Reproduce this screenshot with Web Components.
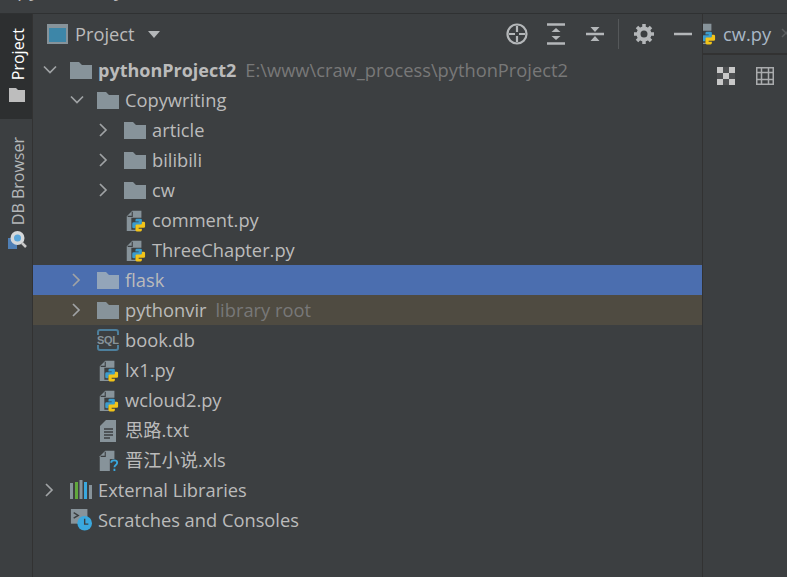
<!DOCTYPE html>
<html>
<head>
<meta charset="utf-8">
<style>
  html, body { margin: 0; height: 100%; background: #3c3f41; overflow: hidden; }
  body { font-family: "Open Sans", "Noto Sans CJK SC", sans-serif; color: #bbbbbb; }
</style>
</head>
<body>
<ide-app>
  <ide-topbar slot="top">pythonProject2,</ide-topbar>
  <ide-sidebar slot="side">
    <side-tab active label="Project" icon="folder"></side-tab>
    <side-tab label="DB Browser" icon="db"></side-tab>
  </ide-sidebar>
  <project-panel slot="main">
    <tree-row depth="0" arrow="open" icon="folder" label="pythonProject2" hint="E:\www\craw_process\pythonProject2" bold></tree-row>
    <tree-row depth="1" arrow="open" icon="folder" label="Copywriting"></tree-row>
    <tree-row depth="2" arrow="closed" icon="folder" label="article"></tree-row>
    <tree-row depth="2" arrow="closed" icon="folder" label="bilibili"></tree-row>
    <tree-row depth="2" arrow="closed" icon="folder" label="cw"></tree-row>
    <tree-row depth="2" icon="python" label="comment.py"></tree-row>
    <tree-row depth="2" icon="python" label="ThreeChapter.py"></tree-row>
    <tree-row depth="1" arrow="closed" icon="folder" label="flask" state="selected"></tree-row>
    <tree-row depth="1" arrow="closed" icon="folder" label="pythonvir" hint="library root" state="library"></tree-row>
    <tree-row depth="1" icon="sql" label="book.db"></tree-row>
    <tree-row depth="1" icon="python" label="lx1.py"></tree-row>
    <tree-row depth="1" icon="python" label="wcloud2.py"></tree-row>
    <tree-row depth="1" icon="text" label="思路.txt"></tree-row>
    <tree-row depth="1" icon="unknown" label="晋江小说.xls"></tree-row>
    <tree-row depth="0" arrow="closed" icon="libs" label="External Libraries"></tree-row>
    <tree-row depth="0" icon="scratch" label="Scratches and Consoles"></tree-row>
  </project-panel>
  <editor-stub slot="right"></editor-stub>
</ide-app>

<script>
"use strict";
// python logo in a 14x14 box, second half is the same shape turned round
const SNAKE = "M5 0h4a1.500 1.500 0 0 1 1.500 1.500V6A1.500 1.500 0 0 1 9 7.500H5A1.500 1.500 0 0 0 3.500 9v1.500h-2A1.500 1.500 0 0 1 0 9V5.500A1.500 1.500 0 0 1 1.500 4H7V3H3.500V1.500A1.500 1.500 0 0 1 5 0z";
const ICONS = {
  folder: `<svg width="22" height="22" viewBox="0 0 22 22"><path d="M0 3h9l3 3h10v14H0z" fill="#87939a"/></svg>`,
  python: `<svg width="24" height="24" viewBox="0 0 24 24"><path d="M3 8l6-6h10v9h-6v13H3z" fill="#87939a"/><path d="M4 8h5V3" fill="none" stroke="#3c3f41" stroke-width="1.200"/>
    <g transform="translate(9 10.500)"><path d="M-1 -1h13v9H5v4H-1z" fill="#3c3f41"/><path d="${SNAKE}" fill="#3b9ccd"/><path d="${SNAKE}" fill="#f2c419" transform="rotate(180 7 7)"/></g></svg>`,
  sql: `<svg width="22" height="22" viewBox="0 0 22 22"><path d="M1 6V3a2 2 0 0 1 2-2h16a2 2 0 0 1 2 2v3M1 16v3a2 2 0 0 0 2 2h16a2 2 0 0 0 2-2v-3" fill="none" stroke="#4d7f9c" stroke-width="2"/><text x="0" y="15" font-family="Liberation Sans, sans-serif" font-size="11" font-weight="700" fill="#87939a" textLength="22">SQL</text></svg>`,
  text: `<svg width="22" height="24" viewBox="0 0 22 24"><path d="M3 8l6-6h10v22H3z" fill="#87939a"/><path d="M7 11h9M7 14h9M7 17h9M7 20h6" stroke="#3c3f41" stroke-width="1.300"/></svg>`,
  unknown: `<svg width="24" height="24" viewBox="0 0 24 24"><path d="M3 8l6-6h10v22H3z" fill="#87939a"/><path d="M4 8h5V3" fill="none" stroke="#3c3f41" stroke-width="1.200"/><rect x="14" y="11" width="10" height="13" fill="#3c3f41"/><path d="M15.500 15c0-3.500 6.500-3.500 6.500 0 0 2.500-3 2.500-3 5" fill="none" stroke="#3aa8de" stroke-width="2"/><rect x="18" y="21.500" width="2" height="2.500" fill="#3aa8de"/></svg>`,
  libs: `<svg width="22" height="22" viewBox="0 0 22 22"><path d="M0 4h3v16H0z" fill="#87939a"/><path d="M5 3h3v17H5z" fill="#62a83e"/><path d="M9.500 1h3v19h-3z" fill="#87939a"/><path d="M14 3h3v17h-3z" fill="#3aa8de"/><path d="M19 6h3v14h-3z" fill="#87939a"/></svg>`,
  scratch: `<svg width="24" height="24" viewBox="0 0 24 24"><path d="M1 0h18v16H1z" fill="#87939a"/><path d="M4 4l5 3-5 3" fill="none" stroke="#3c3f41" stroke-width="1.500"/><circle cx="16" cy="15.500" r="8" fill="#3aa8de"/><path d="M16 10.500v6h4" fill="none" stroke="#3c3f41" stroke-width="1.500"/></svg>`,
  sideFolder: `<svg width="16" height="14" viewBox="0 0 16 14"><path d="M0 0h7l2 2h7v12H0z" fill="#bdbdbd"/></svg>`,
  db: `<svg width="20" height="19" viewBox="0 0 20 19"><path d="M1 7h9v11H1z" fill="#4f7fb5"/><circle cx="10.500" cy="7" r="7" fill="#d5d8da"/><circle cx="10.500" cy="7" r="3.500" fill="#5aa6da"/><path d="M15 12l4 4" stroke="#c8c8c8" stroke-width="2.500"/></svg>`
};

class IdeApp extends HTMLElement {
  constructor() {
    super();
    const shadow = this.attachShadow({ mode: "open" });
    shadow.innerHTML = `
    <style>
      :host { display: flex; flex-direction: column; height: 577px; width: 787px; background: #3c3f41; }
      .body { display: flex; flex: 1; min-height: 0; }
    </style>
    <slot name="top"></slot>
    <div class="body">
      <slot name="side"></slot>
      <slot name="main"></slot>
      <slot name="right"></slot>
    </div>
    `;
  }
}

class IdeTopbar extends HTMLElement {
  constructor() {
    super();
    const shadow = this.attachShadow({ mode: "open" });
    shadow.innerHTML = `
    <style>
      :host { display: block; height: 13px; border-bottom: 1px solid #2f3132; overflow: hidden; flex: none; }
      div { margin: -24px 0 0 17px; font-size: 20px; line-height: 26px; white-space: nowrap; color: #bbbbbb; }
    </style>
    <div><slot></slot></div>
    `;
  }
}

class IdeSidebar extends HTMLElement {
  constructor() {
    super();
    const shadow = this.attachShadow({ mode: "open" });
    shadow.innerHTML = `
    <style>
      :host { display: flex; flex-direction: column; width: 32px; flex: none; border-right: 1px solid #323232; }
    </style>
    <slot></slot>
    `;
  }
}

class SideTab extends HTMLElement {
  constructor() {
    super();
    this.attachShadow({ mode: "open" });
  }
  connectedCallback() {
    const icon = this.getAttribute("icon") === "folder" ? ICONS.sideFolder : ICONS.db;
    this.shadowRoot.innerHTML = `
    <style>
      :host { display: flex; flex-direction: column; align-items: center; gap: 6px; padding: 18px 0 0; color: #b4b7b9; font-size: 16px; }
      :host([active]) { background: #2d2f30; color: #ffffff; padding: 14px 0 17px; gap: 8px; }
      span { writing-mode: vertical-rl; transform: translateX(2px) rotate(180deg); line-height: 20px; white-space: nowrap; }
      i { display: flex; margin-left: 1px; }
    </style>
    <span>${this.getAttribute("label")}</span><i>${icon}</i>
    `;
  }
}

class ProjectPanel extends HTMLElement {
  constructor() {
    super();
    const shadow = this.attachShadow({ mode: "open" });
    shadow.innerHTML = `
    <style>
      :host { display: flex; flex-direction: column; flex: 1; min-width: 0; }
      header { display: flex; align-items: center; height: 41px; padding: 0 10px 2px 14px; flex: none; box-sizing: border-box; }
      .win { width: 21px; height: 20px; box-sizing: border-box; border: 2px solid #87939a; border-top-width: 4px; background: #3d86a8; margin-right: 7px; }
      .title { font-size: 18.300px; color: #bbbbbb; }
      .drop { width: 0; height: 0; border: 6.500px solid transparent; border-top: 7px solid #b4b7b9; border-bottom: 0; margin-left: 13px; margin-top: 2px; }
      .tools { display: flex; align-items: center; margin-left: auto; }
      .tools svg { display: block; }
      .sep { width: 1px; height: 30px; background: #55585a; margin: 0 15px 0 14px; }
    </style>
    <header>
      <span class="win"></span>
      <span class="title">Project</span>
      <span class="drop"></span>
      <span class="tools">
        <svg width="22" height="22" viewBox="0 0 22 22" style="margin-right:19px"><circle cx="11" cy="11" r="9.500" fill="none" stroke="#b4b7b9" stroke-width="2.200"/><path d="M11 3v6M11 13v6M3 11h6M13 11h6" stroke="#b4b7b9" stroke-width="2.200"/></svg>
        <svg width="18" height="22" viewBox="0 0 18 22" style="margin-right:21px"><path d="M0 1.500h18M0 20.500h18" stroke="#b4b7b9" stroke-width="2.500"/><path d="M9 5l4.500 4h-9zM9 17l4.500-4h-9z" fill="#b4b7b9"/></svg>
        <svg width="18" height="20" viewBox="0 0 18 20"><path d="M0 10h18" stroke="#b4b7b9" stroke-width="2.500"/><path d="M9 8L4.500 3h9zM9 12l4.500 5h-9z" fill="#b4b7b9"/></svg>
        <span class="sep"></span>
        <svg width="20" height="20" viewBox="0 0 20 20" style="margin-right:20px"><circle cx="10" cy="10" r="5.500" fill="none" stroke="#b4b7b9" stroke-width="4"/><path d="M10 0v4M10 16v4M0 10h4M16 10h4M3 3l3 3M14 14l3 3M17 3l-3 3M6 14l-3 3" stroke="#b4b7b9" stroke-width="3.500"/></svg>
        <svg width="18" height="4" viewBox="0 0 18 4"><path d="M0 2h18" stroke="#b4b7b9" stroke-width="2.500"/></svg>
      </span>
    </header>
    <slot></slot>
    `;
  }
}

class TreeRow extends HTMLElement {
  constructor() {
    super();
    this.attachShadow({ mode: "open" });
  }
  connectedCallback() {
    const depth = Number(this.getAttribute("depth") || 0);
    const arrow = this.getAttribute("arrow");
    let chevron = "";
    if (arrow === "open") {
      chevron = `<svg width="14" height="14" viewBox="0 0 14 14"><path d="M1 3.500l6 6 6-6" fill="none" stroke="#a0a3a5" stroke-width="1.700"/></svg>`;
    } else if (arrow === "closed") {
      chevron = `<svg width="14" height="14" viewBox="0 0 14 14"><path d="M3 1l6 6-6 6" fill="none" stroke="#a0a3a5" stroke-width="1.700"/></svg>`;
    }
    const hint = this.getAttribute("hint");
    let icon = ICONS[this.getAttribute("icon")];
    if (this.getAttribute("state") === "selected") icon = icon.replace("#87939a", "#93a5b9");
    this.shadowRoot.innerHTML = `
    <style>
      :host { display: flex; align-items: center; height: 30px; padding-left: ${depth * 27 + 10}px; font-size: 18.300px; color: #bbbbbb; white-space: nowrap; }
      :host([state="selected"]) { background: #4b6eaf; }
      :host([state="library"]) { background: #4f4b41; }
      .arrow { width: 27px; display: flex; flex: none; }
      .icon { width: 22px; height: 24px; display: flex; align-items: center; justify-content: flex-start; flex: none; margin-right: 6px; }
      .label { margin-bottom: 2px; }
      :host([bold]) .label { font-weight: 700; font-size: 18px; margin-bottom: 0; }
      .hint { color: #787878; margin: 0 0 2px 9px; }
    </style>
    <span class="arrow">${chevron}</span>
    <span class="icon">${icon}</span>
    <span class="label">${this.getAttribute("label")}</span>
    ${hint ? `<span class="hint">${hint}</span>` : ""}
    `;
  }
}

class EditorStub extends HTMLElement {
  constructor() {
    super();
    const shadow = this.attachShadow({ mode: "open" });
    shadow.innerHTML = `
    <style>
      :host { display: flex; flex-direction: column; width: 84px; flex: none; border-left: 1px solid #323232; }
      .tab { display: flex; align-items: center; height: 38px; border-bottom: 2px solid #323232; font-size: 18.300px; color: #a9b7c6; white-space: nowrap; overflow: hidden; padding-bottom: 1px; box-sizing: content-box; }
      .tab i { display: flex; flex: none; margin-left: -9px; width: 22px; }
      .tab span { margin-left: 7px; }
      .tab svg.close { margin-left: 10px; flex: none; }
      .tools { display: flex; gap: 21px; padding: 12px 0 0 14px; }
      svg { display: block; }
    </style>
    <div class="tab"><i>${ICONS.python}</i><span>cw.py</span><svg class="close" width="10" height="10" viewBox="0 0 10 10"><path d="M1 1l8 8M9 1l-8 8" stroke="#5a5d5f" stroke-width="1.500"/></svg></div>
    <div class="tools">
      <svg width="18" height="18" viewBox="0 0 18 18"><path d="M0 0h6v6H0zM12 0h6v6h-6zM6 6h6v6H6zM0 12h6v6H0zM12 12h6v6h-6z" fill="#c8c8c8"/><path d="M6 0h6v6H6zM0 6h6v6H0zM12 6h6v6h-6zM6 12h6v6H6z" fill="#4e5052"/></svg>
      <svg width="18" height="18" viewBox="0 0 18 18"><path d="M.75.75h16.500v16.500H.75zM0 5.500h18M0 12.500h18M5.500 0v18M12.500 0v18" fill="none" stroke="#a9abad" stroke-width="1.500"/></svg>
    </div>
    `;
  }
}

customElements.define("ide-app", IdeApp);
customElements.define("ide-topbar", IdeTopbar);
customElements.define("ide-sidebar", IdeSidebar);
customElements.define("side-tab", SideTab);
customElements.define("project-panel", ProjectPanel);
customElements.define("tree-row", TreeRow);
customElements.define("editor-stub", EditorStub);
</script>
</body>
</html>
